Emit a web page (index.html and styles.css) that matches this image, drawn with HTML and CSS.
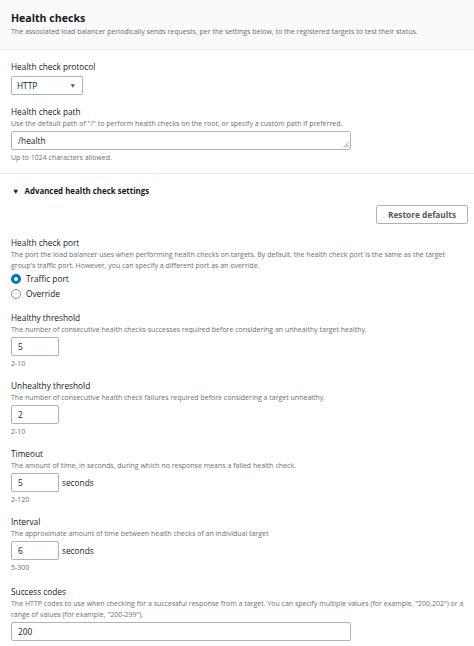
FILE: index.html
```html
<!DOCTYPE html>
<html lang="en">
<head>
    <meta charset="UTF-8">
    <meta name="viewport" content="width=device-width, initial-scale=1.0">
    <title>Health checks</title>
    <link rel="stylesheet" href="styles.css">
</head>
<body>
    <header class="panel-header">
        <h2>Health checks</h2>
        <p>The associated load balancer periodically sends requests, per the settings below, to the registered targets to test their status.</p>
    </header>

    <div class="panel-body">
        <div class="field">
            <label class="label">Health check protocol</label>
            <div class="select">
                <span>HTTP</span>
                <span class="caret">&#9660;</span>
            </div>
        </div>

        <div class="field">
            <label class="label">Health check path</label>
            <p class="desc">Use the default path of "/" to perform health checks on the root, or specify a custom path if preferred.</p>
            <div class="input wide">
                /health
                <svg class="grip" width="6" height="6" viewBox="0 0 6 6">
                    <path d="M5.5 0.5 L0.5 5.5 M5.5 3 L3 5.5" stroke="#879596" stroke-width="0.8" fill="none"/>
                </svg>
            </div>
            <p class="hint">Up to 1024 characters allowed.</p>
        </div>
    </div>

    <div class="divider"></div>

    <div class="panel-body">
        <div class="expander">
            <span class="tri">&#9660;</span>
            Advanced health check settings
        </div>

        <div class="actions">
            <button class="btn">Restore defaults</button>
        </div>

        <div class="field">
            <label class="label">Health check port</label>
            <p class="desc">The port the load balancer uses when performing health checks on targets. By default, the health check port is the same as the target group's traffic port. However, you can specify a different port as an override.</p>
            <div class="radio checked"><span class="dot"></span>Traffic port</div>
            <div class="radio"><span class="dot"></span>Override</div>
        </div>

        <div class="field">
            <label class="label">Healthy threshold</label>
            <p class="desc">The number of consecutive health checks successes required before considering an unhealthy target healthy.</p>
            <div class="input small">5</div>
            <p class="hint">2-10</p>
        </div>

        <div class="field">
            <label class="label">Unhealthy threshold</label>
            <p class="desc">The number of consecutive health check failures required before considering a target unhealthy.</p>
            <div class="input small">2</div>
            <p class="hint">2-10</p>
        </div>

        <div class="field">
            <label class="label">Timeout</label>
            <p class="desc">The amount of time, in seconds, during which no response means a failed health check.</p>
            <div class="row">
                <div class="input small">5</div>
                <span class="unit">seconds</span>
            </div>
            <p class="hint">2-120</p>
        </div>

        <div class="field">
            <label class="label">Interval</label>
            <p class="desc">The approximate amount of time between health checks of an individual target</p>
            <div class="row">
                <div class="input small">6</div>
                <span class="unit">seconds</span>
            </div>
            <p class="hint">5-300</p>
        </div>

        <div class="field last">
            <label class="label">Success codes</label>
            <p class="desc">The HTTP codes to use when checking for a successful response from a target. You can specify multiple values (for example, "200,202") or a range of values (for example, "200-299").</p>
            <div class="input wide">200</div>
        </div>
    </div>
</body>
</html>
```

FILE: styles.css
```css
body {
    margin: 0;
    font-family: "Open Sans", "Noto Sans", sans-serif;
    color: #16191f;
    background-color: #fff;
}

p {
    margin: 0;
}

/* Header band */
.panel-header {
    background-color: #fafafa;
    border-bottom: 1px solid #eaeded;
    padding: 11px 11px 10px 11px;
    height: 28px;
}

.panel-header h2 {
    margin: 0;
    font-size: 10.6px;
    font-weight: 700;
    line-height: 15px;
}

.panel-header p {
    font-size: 7px;
    line-height: 11px;
    color: #687078;
}

.panel-body {
    padding: 0 11px;
}

/* Fields */
.field {
    padding-top: 11px;
}

.field.last {
    padding-top: 13px;
}

.label {
    display: block;
    font-size: 8.3px;
    line-height: 12px;
}

.desc {
    font-size: 7px;
    line-height: 11px;
    margin-right: -6px;
    color: #687078;
}

.hint {
    font-size: 7px;
    line-height: 11px;
    margin-top: 2px;
    color: #687078;
}

.input {
    position: relative;
    box-sizing: border-box;
    height: 19px;
    margin-top: 2px;
    padding: 0 6px;
    border: 1px solid #aab7b8;
    border-radius: 2px;
    font-size: 8.3px;
    line-height: 17px;
}

.input.wide {
    width: 340px;
}

.input.small {
    width: 48px;
}

.grip {
    position: absolute;
    right: 1px;
    bottom: 1px;
}

.row {
    display: flex;
    align-items: center;
}

.unit {
    margin-left: 3px;
    margin-top: 1px;
    font-size: 8.3px;
}

.select {
    box-sizing: border-box;
    width: 72px;
    height: 19px;
    margin-top: 3px;
    padding: 0 6px 0 5px;
    border: 1px solid #aab7b8;
    border-radius: 2px;
    display: flex;
    justify-content: space-between;
    align-items: center;
    font-size: 8.3px;
}

.caret {
    font-size: 6.5px;
    color: #545b64;
}

.divider {
    margin-top: 10px;
    border-top: 1px solid #eaeded;
}

/* Advanced section */
.expander {
    margin-top: 11px;
    font-size: 7.9px;
    font-weight: 700;
    line-height: 12px;
}

.tri {
    font-size: 7.5px;
    margin: 0 3px 0 1px;
}

.actions {
    display: flex;
    justify-content: flex-end;
    margin-top: 8px;
    margin-right: -5px;
}

.btn {
    width: 92px;
    height: 19px;
    padding: 0;
    background-color: #fff;
    border: 1px solid #aab7b8;
    border-radius: 2px;
    font-family: "Open Sans", "Noto Sans", sans-serif;
    font-size: 8.3px;
    font-weight: 700;
    color: #545b64;
}

.actions + .field {
    padding-top: 13px;
}

.radio {
    display: flex;
    align-items: center;
    height: 15px;
    font-size: 8.3px;
}

.radio .dot {
    box-sizing: border-box;
    width: 10px;
    height: 10px;
    border-radius: 50%;
    border: 1px solid #879596;
    margin-right: 5px;
}

.radio.checked .dot {
    border: 3px solid #0073bb;
}
```
